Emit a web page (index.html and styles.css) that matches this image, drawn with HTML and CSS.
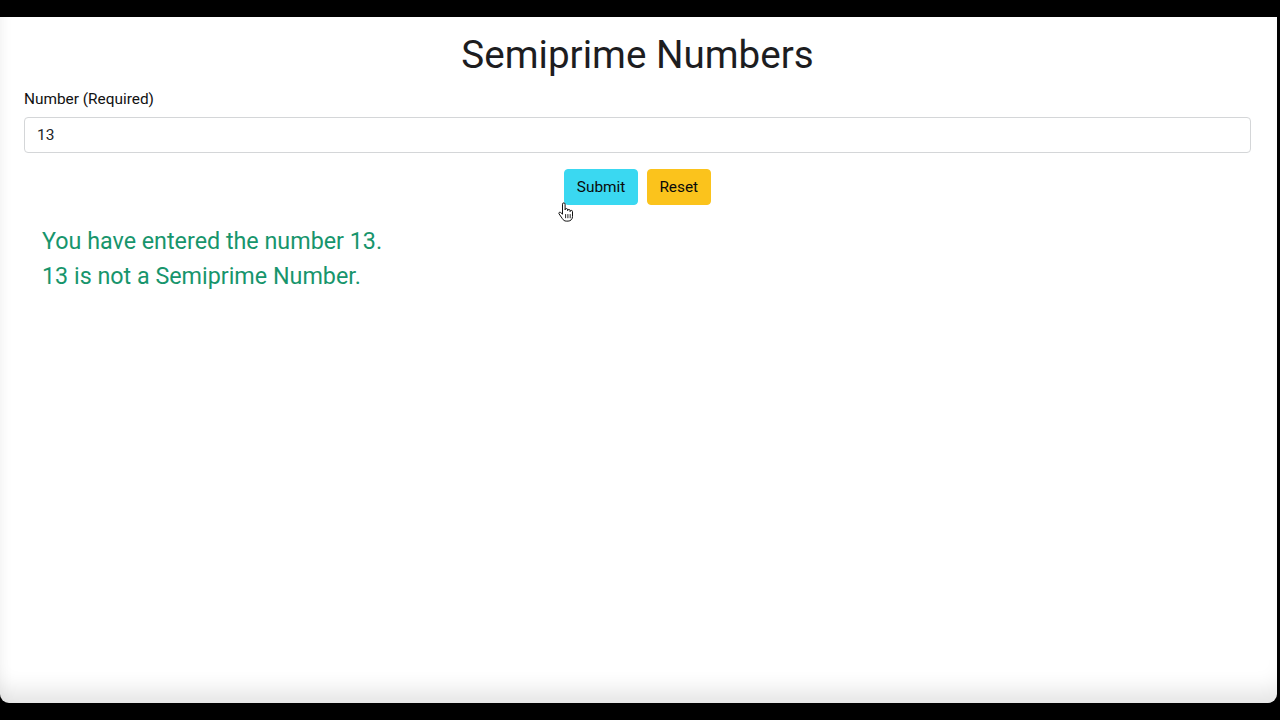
FILE: index.html
```html
<!DOCTYPE html>
<html lang="en">
<head>
<meta charset="utf-8">
<title>Semiprime Numbers</title>
<link rel="stylesheet" href="styles.css">
</head>
<body>
<div class="screen">
  <main class="container">
    <h1 class="title">Semiprime Numbers</h1>
    <form class="form">
      <label class="label" for="num">Number (Required)</label>
      <input class="input" id="num" type="text" value="13">
      <div class="actions">
        <button type="button" class="btn btn-info">Submit</button>
        <button type="button" class="btn btn-warning">Reset</button>
      </div>
    </form>
    <div class="result">
      <p>You have entered the number 13.</p>
      <p>13 is not a Semiprime Number.</p>
    </div>
  </main>
  <svg class="cursor" width="16" height="20" viewBox="0 0 16 20" aria-hidden="true">
    <path d="M4.5 2.2a1.3 1.3 0 0 1 2.6 0v5.6a1.25 1.25 0 0 1 2.5 0v0.9a1.25 1.25 0 0 1 2.5 0v0.9a1.2 1.2 0 0 1 2.4 0V14.5c0 2.6-1.8 4.6-4.4 4.6H8.2c-1.7 0-2.8-0.9-3.8-2.4L1 11.8c-0.7-1 0.7-2.2 1.7-1.3L4.5 12.2Z" fill="#fff" stroke="#111" stroke-width="1" stroke-linejoin="round"/>
    <path d="M7.6 12.5v3.3M9.9 12.5v3.3M12.2 12.5v3.3" stroke="#111" stroke-width="0.9" stroke-linecap="round"/>
  </svg>
</div>
</body>
</html>
```
FILE: styles.css
```css
html, body {
  margin: 0;
  padding: 0;
  background: #000;
}

body {
  width: 1280px;
  height: 720px;
  overflow: hidden;
  font-family: Roboto, "Liberation Sans", Arial, sans-serif;
  color: #212529;
}

.screen {
  position: relative;
  margin-top: 17px;
  width: 1277px;
  height: 686px;
  background: #fff;
  border-radius: 0 0 9px 9px;
  box-shadow: inset 0 -24px 22px -12px rgba(0, 0, 0, 0.11),
              inset 14px 0 16px -14px rgba(0, 0, 0, 0.05);
}

.container {
  padding: 0 26px 0 24px;
}

.title {
  margin: 0;
  padding-top: 14px;
  font-size: 38.6px;
  font-weight: 400;
  line-height: 48px;
  text-align: center;
  color: #1d1d1f;
}

.form {
  display: flex;
  flex-direction: column;
  margin-top: 8px;
}

.label {
  font-size: 15.4px;
  line-height: 24px;
  color: #111;
  margin-bottom: 6px;
}

.input {
  box-sizing: border-box;
  width: 100%;
  height: 36px;
  padding: 0 12px;
  border: 1px solid #d4d6d8;
  border-radius: 4px;
  font-family: inherit;
  font-size: 15.5px;
  color: #212529;
  background: #fff;
}

.actions {
  display: flex;
  justify-content: center;
  gap: 9px;
  margin-top: 16px;
}

.btn {
  height: 36px;
  padding: 0 11.5px;
  border: 1px solid transparent;
  border-radius: 4px;
  font-family: inherit;
  font-size: 15.4px;
  font-weight: 400;
  line-height: 34px;
  color: #0a0a0a;
  cursor: pointer;
}

.btn-info {
  background: #3ad8f1;
  border-color: #3ad8f1;
}

.btn-warning {
  background: #fbc31c;
  border-color: #fbc31c;
}

.result {
  margin-top: 19px;
  padding-left: 18px;
  color: #17956c;
  font-size: 23.3px;
  line-height: 35px;
}

.result p {
  margin: 0;
}

.cursor {
  position: absolute;
  left: 558px;
  top: 185px;
}
```
